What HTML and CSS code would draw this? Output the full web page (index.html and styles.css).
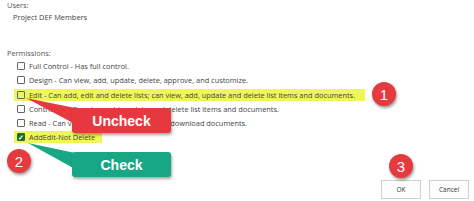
FILE: index.html
```html
<!DOCTYPE html>
<html lang="en">
<head>
  <meta charset="UTF-8">
  <link rel="stylesheet" href="styles.css">
  <title>Permissions</title>
</head>
<body>
<div class="page">
  <div class="label">Users:</div>
  <div class="user">Project DEF Members</div>

  <div class="label perms">Permissions:</div>
  <div class="list">
    <div class="row"><span class="box"></span>Full Control - Has full control.</div>
    <div class="row"><span class="box"></span>Design - Can view, add, update, delete, approve, and customize.</div>
    <div class="row"><span class="mark mark-edit"><span class="box"></span>Edit - Can add, edit and delete lists; can view, add, update and delete list items and documents.</span></div>
    <div class="row"><span class="box"></span>Contribute - Can view, add, update, and delete list items and documents.</div>
    <div class="row"><span class="box"></span>Read - Can view pages and list items and download documents.</div>
    <div class="row"><span class="mark"><span class="box checked">&#10003;</span>AddEdit-Not Delete</span></div>
  </div>

  <div class="buttons">
    <button class="btn">OK</button>
    <button class="btn">Cancel</button>
  </div>

  <!-- annotations -->
  <svg class="pointers" width="474" height="201">
    <polygon points="26,98 75,108 75,124" fill="#e8383f"/>
    <polygon points="28,143 75,153 75,169" fill="#17a784"/>
  </svg>
  <div class="callout red">Uncheck</div>
  <div class="callout green">Check</div>
  <div class="badge b1">1</div>
  <div class="badge b2">2</div>
  <div class="badge b3">3</div>
</div>
</body>
</html>
```

FILE: styles.css
```css
* {
  margin: 0;
  padding: 0;
  box-sizing: border-box;
}
body {
  width: 474px;
  height: 201px;
  background: #fff;
  font-family: "Open Sans", "Noto Sans", sans-serif;
  font-size: 7.4px;
  color: #444;
  overflow: hidden;
}
.page {
  position: relative;
  width: 474px;
  height: 201px;
  padding-left: 7px;
}
.label {
  height: 11px;
  line-height: 11px;
  color: #555;
}
.user {
  height: 12px;
  line-height: 12px;
  padding-left: 6px;
  font-size: 7.4px;
}
.perms {
  margin-top: 25px;
}
.list {
  margin-top: 0;
}
.row {
  height: 14.25px;
  display: flex;
  align-items: center;
  padding-left: 10px;
}
.box {
  width: 8px;
  height: 8px;
  border: 1px solid #666;
  border-radius: 1px;
  margin-right: 4px;
  flex: none;
  display: flex;
  align-items: center;
  justify-content: center;
  font-size: 7px;
  line-height: 1;
  color: #fff;
}
.box.checked {
  background: #1f6a3c;
  border-color: #1f6a3c;
  font-weight: bold;
}
.mark {
  display: flex;
  align-items: center;
  height: 12px;
  margin-left: -3px;
  padding: 0 7px 0 3px;
  background: #eef65a;
}
.mark-edit {
  padding-right: 10px;
}
.buttons {
  display: flex;
  justify-content: flex-end;
  gap: 8px;
  margin-top: 35px;
  padding-right: 5px;
}
.btn {
  width: 40px;
  height: 19px;
  background: #fdfdfd;
  border: 1px solid #cfcfcf;
  font-family: inherit;
  font-size: 6.5px;
  color: #333;
}
.pointers {
  position: absolute;
  left: 0;
  top: 0;
}
.callout {
  position: absolute;
  left: 72px;
  width: 99px;
  height: 25px;
  border-radius: 3px;
  color: #fff;
  font-family: "Liberation Sans", Arial, sans-serif;
  font-weight: bold;
  font-size: 14px;
  display: flex;
  align-items: center;
  justify-content: center;
  box-shadow: 1px 2px 3px rgba(0, 0, 0, 0.35);
}
.red {
  top: 108px;
  background: #e8383f;
}
.green {
  top: 152px;
  background: #17a784;
}
.badge {
  position: absolute;
  width: 24px;
  height: 24px;
  border-radius: 50%;
  background: #e53a3e;
  color: #fff;
  font-family: "Liberation Sans", Arial, sans-serif;
  font-size: 15px;
  display: flex;
  align-items: center;
  justify-content: center;
  box-shadow: 1px 2px 3px rgba(0, 0, 0, 0.4);
}
.b1 {
  left: 372px;
  top: 82px;
}
.b2 {
  left: 7px;
  top: 149px;
}
.b3 {
  left: 389px;
  top: 154px;
}
```
